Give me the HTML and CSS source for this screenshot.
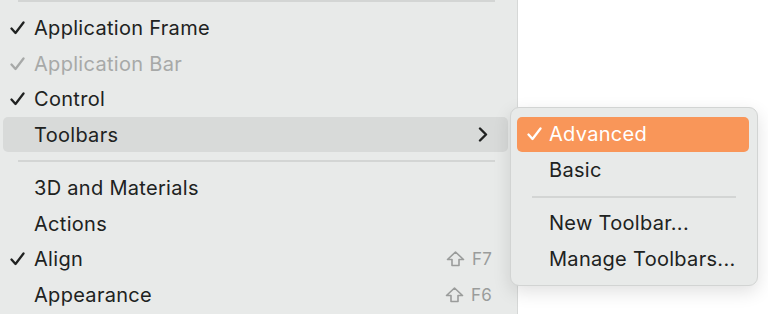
FILE: index.html
```html
<!DOCTYPE html>
<html>
<head>
<meta charset="utf-8">
<link rel="stylesheet" href="styles.css">
</head>
<body>
<div class="page">
  <div class="menu">
    <div class="sep sep-top"><div class="line"></div></div>
    <div class="row"><span class="check"><svg width="15" height="14" viewBox="0 0 15 14"><polyline points="1.5,7.5 5.5,12 13.5,1.5" /></svg></span><span class="label">Application Frame</span></div>
    <div class="row disabled"><span class="check"><svg width="15" height="14" viewBox="0 0 15 14"><polyline points="1.5,7.5 5.5,12 13.5,1.5" /></svg></span><span class="label">Application Bar</span></div>
    <div class="row"><span class="check"><svg width="15" height="14" viewBox="0 0 15 14"><polyline points="1.5,7.5 5.5,12 13.5,1.5" /></svg></span><span class="label">Control</span></div>
    <div class="row hover"><span class="check"></span><span class="label">Toolbars</span><span class="chev"><svg width="10" height="15" viewBox="0 0 10 15"><polyline points="2,1.5 8,7.5 2,13.5" /></svg></span></div>
    <div class="sep"><div class="line"></div></div>
    <div class="row"><span class="check"></span><span class="label">3D and Materials</span></div>
    <div class="row"><span class="check"></span><span class="label">Actions</span></div>
    <div class="row"><span class="check"><svg width="15" height="14" viewBox="0 0 15 14"><polyline points="1.5,7.5 5.5,12 13.5,1.5" /></svg></span><span class="label">Align</span><span class="shortcut"><svg class="shift" width="19" height="16" viewBox="0 0 19 16"><path d="M9.5 1 L17.5 8.5 L13 8.5 L13 14.5 L6 14.5 L6 8.5 L1.5 8.5 Z" /></svg><span>F7</span></span></div>
    <div class="row"><span class="check"></span><span class="label">Appearance</span><span class="shortcut"><svg class="shift" width="19" height="16" viewBox="0 0 19 16"><path d="M9.5 1 L17.5 8.5 L13 8.5 L13 14.5 L6 14.5 L6 8.5 L1.5 8.5 Z" /></svg><span>F6</span></span></div>
  </div>
  <div class="submenu">
    <div class="row selected"><span class="check"><svg width="15" height="14" viewBox="0 0 15 14"><polyline points="1.5,7.5 5.5,12 13.5,1.5" /></svg></span><span class="label">Advanced</span></div>
    <div class="row"><span class="check"></span><span class="label">Basic</span></div>
    <div class="sep"><div class="line"></div></div>
    <div class="row"><span class="check"></span><span class="label">New Toolbar...</span></div>
    <div class="row"><span class="check"></span><span class="label">Manage Toolbars...</span></div>
  </div>
</div>
</body>
</html>
```

FILE: styles.css
```css
html, body {
  margin: 0;
  padding: 0;
  background: #ffffff;
}
.page {
  position: relative;
  width: 768px;
  height: 314px;
  overflow: hidden;
  font-family: Inter, "Noto Sans", sans-serif;
  font-size: 20px;
  letter-spacing: 0.3px;
  color: #202221;
}
.menu {
  height: 314px;
  background: #e8eae9;
  border-right: 1px solid #d6d8d7;
  padding: 0 9px 0 3px;
  box-sizing: border-box;
  width: 518px;
}
.sep {
  height: 18px;
  display: flex;
  align-items: center;
  padding: 0 13px 0 15px;
}
.sep-top {
  height: 10.25px;
  align-items: flex-start;
}
.line {
  flex: 1;
  height: 2px;
  background: #d3d5d4;
}
.row {
  height: 35.5px;
  display: flex;
  align-items: center;
  border-radius: 5px;
  padding: 0 16px 0 7px;
}
.row.hover {
  background: #d8dad9;
}
.check {
  width: 24px;
  display: flex;
  align-items: center;
}
.check svg polyline {
  fill: none;
  stroke: #202221;
  stroke-width: 2.3;
  stroke-linecap: round;
  stroke-linejoin: round;
}
.label {
  flex: 1;
  white-space: nowrap;
}
.disabled {
  color: #a7a9a8;
}
.disabled .check svg polyline {
  stroke: #a7a9a8;
}
.chev {
  display: flex;
  align-items: center;
  margin-right: 4px;
}
.chev svg polyline {
  fill: none;
  stroke: #202221;
  stroke-width: 2.4;
  stroke-linecap: round;
  stroke-linejoin: round;
}
.shortcut {
  display: flex;
  align-items: center;
  gap: 7px;
  color: #9a9c9b;
  font-size: 17px;
  letter-spacing: 0.2px;
}
.shift path {
  fill: none;
  stroke: #9a9c9b;
  stroke-width: 1.6;
  stroke-linejoin: round;
}
.submenu {
  position: absolute;
  left: 510px;
  top: 107px;
  width: 248px;
  height: 179px;
  box-sizing: border-box;
  background: #e8eae9;
  border: 1px solid #d2d4d3;
  border-radius: 9px;
  box-shadow: 0 6px 18px rgba(0,0,0,0.12);
  padding: 8.5px 8px 0 6px;
}
.submenu .row {
  padding: 0 10px 0 10px;
}
.submenu .check {
  width: 22px;
}
.submenu .sep {
  padding: 0 13px 0 15px;
}
.row.selected {
  background: #f99659;
  color: #ffffff;
}
.row.selected .check svg polyline {
  stroke: #ffffff;
}
```
